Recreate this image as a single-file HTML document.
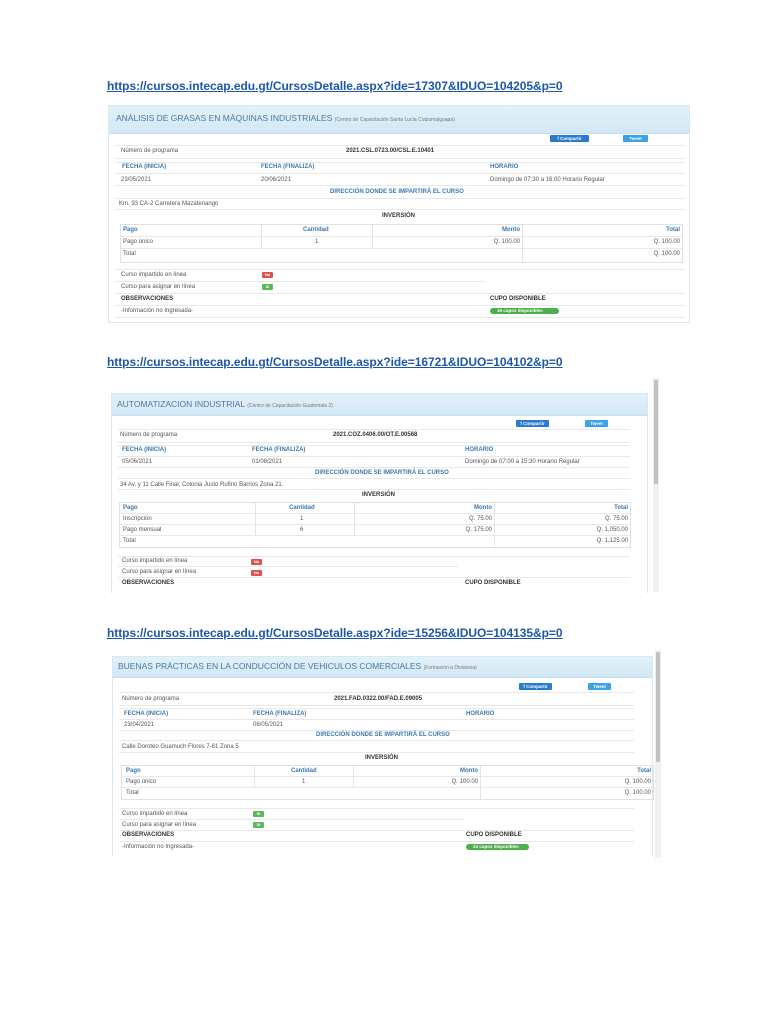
<!DOCTYPE html>
<html><head><meta charset="utf-8"><style>
*{margin:0;padding:0;box-sizing:border-box}
body{width:768px;height:1024px;background:#fff;position:relative;overflow:hidden;font-family:"Liberation Sans",Arial,sans-serif;color:#555}
.a{position:absolute;white-space:nowrap;font-size:6px;line-height:8px}
.lnk{position:absolute;font-size:12px;font-weight:bold;color:#1f57a8;text-decoration:underline;line-height:14px;letter-spacing:-0.05px}
.pan{position:absolute;border:1px solid #d6e9f3;background:#fff}
.hd{position:absolute;background:linear-gradient(#e3f1f9,#d2e8f5);border-bottom:1px solid #c4dfee}
.ttl{position:absolute;white-space:nowrap;font-size:8.5px;color:#4a7a9e;line-height:10px}
.ttl small{font-size:5px;color:#777}
.b{font-weight:bold;color:#3b78ad}
.k{font-weight:bold;color:#333}
.ln{position:absolute;height:1px;background:#e8e8e8}
.vl{position:absolute;width:1px;background:#e3e3e3}
.tb{position:absolute;border:1px solid #e0e0e0}
.btn{position:absolute;background:#2a7ad0;color:#fff;font-size:4.5px;font-weight:bold;text-align:center;line-height:7px;height:7px;border-radius:1px}
.tw{background:#3ba2e6}
.no{position:absolute;background:#d9534f;color:#fff;font-size:4px;font-weight:bold;width:11px;height:6px;line-height:6px;text-align:center;border-radius:1px}
.si{background:#5cb85c}
.pill{position:absolute;background:#4cae4c;color:#fff;font-size:4.5px;font-weight:bold;height:6px;line-height:6px;border-radius:3px;padding-left:7px}
.sb{position:absolute;background:#f0f0f0}
.sb i{position:absolute;left:1px;right:1px;background:#c1c1c1}
.r{text-align:right}
</style></head><body>

<!-- BLOCK 1 -->
<div class="lnk" style="left:107px;top:79px">https://cursos.intecap.edu.gt/CursosDetalle.aspx?ide=17307&amp;IDUO=104205&amp;p=0</div>
<div class="pan" style="left:108px;top:105px;width:582px;height:218px"></div>
<div class="hd" style="left:109px;top:106px;width:580px;height:28px"></div>
<div class="ttl" style="left:116px;top:113px">ANÁLISIS DE GRASAS EN MÁQUINAS INDUSTRIALES <small>(Centro de Capacitación Santa Lucía Cotzumalguapa)</small></div>
<div class="btn" style="left:550px;top:135px;width:39px">f Compartir</div>
<div class="btn tw" style="left:623px;top:135px;width:25px">Tweet</div>
<div class="ln" style="left:115px;top:145px;width:570px"></div>
<div class="a" style="left:121px;top:147px">Número de programa</div>
<div class="a k" style="left:346px;top:147px">2021.CSL.0723.00/CSL.E.10401</div>
<div class="ln" style="left:115px;top:158px;width:570px"></div>
<div class="ln" style="left:115px;top:162px;width:570px"></div>
<div class="a b" style="left:122px;top:163px">FECHA (INICIA)</div>
<div class="a b" style="left:261px;top:163px">FECHA (FINALIZA)</div>
<div class="a b" style="left:490px;top:163px">HORARIO</div>
<div class="ln" style="left:115px;top:173px;width:570px"></div>
<div class="a" style="left:121px;top:176px">23/05/2021</div>
<div class="a" style="left:261px;top:176px">20/06/2021</div>
<div class="a" style="left:490px;top:176px">Domingo de 07:30 a 16:00 Horario Regular</div>
<div class="ln" style="left:115px;top:185px;width:570px"></div>
<div class="a b" style="left:330px;top:188px">DIRECCIÓN DONDE SE IMPARTIRÁ EL CURSO</div>
<div class="ln" style="left:115px;top:198px;width:570px"></div>
<div class="a" style="left:119px;top:200px">Km. 93 CA-2 Carretera Mazatenango</div>
<div class="ln" style="left:115px;top:209px;width:570px"></div>
<div class="a k" style="left:382px;top:212px">INVERSIÓN</div>
<div class="tb" style="left:120px;top:224px;width:563px;height:39px"></div>
<div class="ln" style="left:121px;top:236px;width:561px"></div>
<div class="ln" style="left:121px;top:248px;width:561px"></div>
<div class="vl" style="left:261px;top:225px;height:23px"></div>
<div class="vl" style="left:372px;top:225px;height:23px"></div>
<div class="vl" style="left:522px;top:225px;height:37px"></div>
<div class="a b" style="left:123px;top:226px">Pago</div>
<div class="a b" style="left:303px;top:226px">Cantidad</div>
<div class="a b r" style="left:470px;top:226px;width:50px">Monto</div>
<div class="a b r" style="left:620px;top:226px;width:60px">Total</div>
<div class="a" style="left:123px;top:238px">Pago único</div>
<div class="a" style="left:315px;top:238px">1</div>
<div class="a r" style="left:470px;top:238px;width:50px">Q. 100.00</div>
<div class="a r" style="left:610px;top:238px;width:70px">Q. 100.00</div>
<div class="a" style="left:123px;top:250px">Total</div>
<div class="a r" style="left:610px;top:250px;width:70px">Q. 100.00</div>
<div class="ln" style="left:115px;top:269px;width:570px"></div>
<div class="a" style="left:121px;top:271px">Curso impartido en línea</div>
<div class="no" style="left:262px;top:272px">No</div>
<div class="ln" style="left:115px;top:281px;width:370px"></div>
<div class="a" style="left:121px;top:283px">Curso para asignar en línea</div>
<div class="no si" style="left:262px;top:284px">Sí</div>
<div class="ln" style="left:115px;top:293px;width:570px"></div>
<div class="a k" style="left:121px;top:295px">OBSERVACIONES</div>
<div class="a k" style="left:490px;top:295px">CUPO DISPONIBLE</div>
<div class="ln" style="left:115px;top:305px;width:570px"></div>
<div class="a" style="left:121px;top:307px">-Información no Ingresada-</div>
<div class="pill" style="left:490px;top:308px;width:69px">15 cupos disponibles</div>
<div class="ln" style="left:115px;top:317px;width:570px"></div>

<!-- BLOCK 2 -->
<div class="lnk" style="left:107px;top:355px">https://cursos.intecap.edu.gt/CursosDetalle.aspx?ide=16721&amp;IDUO=104102&amp;p=0</div>
<div class="sb" style="left:653px;top:378px;width:6px;height:214px"><i style="top:2px;height:104px"></i></div>
<div class="pan" style="left:111px;top:393px;width:537px;height:200px;border-bottom:none"></div>
<div class="hd" style="left:112px;top:394px;width:535px;height:22px"></div>
<div class="ttl" style="left:117px;top:399px">AUTOMATIZACION INDUSTRIAL <small>(Centro de Capacitación Guatemala 2)</small></div>
<div class="btn" style="left:516px;top:420px;width:33px">f Compartir</div>
<div class="btn tw" style="left:585px;top:420px;width:23px">Tweet</div>
<div class="ln" style="left:118px;top:429px;width:512px"></div>
<div class="a" style="left:120px;top:431px">Número de programa</div>
<div class="a k" style="left:333px;top:431px">2021.COZ.0406.00/OT.E.00568</div>
<div class="ln" style="left:118px;top:442px;width:512px"></div>
<div class="ln" style="left:118px;top:445px;width:512px"></div>
<div class="a b" style="left:122px;top:446px">FECHA (INICIA)</div>
<div class="a b" style="left:252px;top:446px">FECHA (FINALIZA)</div>
<div class="a b" style="left:465px;top:446px">HORARIO</div>
<div class="ln" style="left:118px;top:456px;width:512px"></div>
<div class="a" style="left:122px;top:458px">05/06/2021</div>
<div class="a" style="left:252px;top:458px">01/08/2021</div>
<div class="a" style="left:465px;top:458px">Domingo de 07:00 a 15:30 Horario Regular</div>
<div class="ln" style="left:118px;top:467px;width:512px"></div>
<div class="a b" style="left:315px;top:469px">DIRECCIÓN DONDE SE IMPARTIRÁ EL CURSO</div>
<div class="ln" style="left:118px;top:478px;width:512px"></div>
<div class="a" style="left:120px;top:481px">34 Av. y 11 Calle Final, Colonia Justo Rufino Barrios Zona 21.</div>
<div class="ln" style="left:118px;top:489px;width:512px"></div>
<div class="a k" style="left:362px;top:491px">INVERSIÓN</div>
<div class="tb" style="left:119px;top:502px;width:512px;height:46px"></div>
<div class="ln" style="left:120px;top:513px;width:510px"></div>
<div class="ln" style="left:120px;top:524px;width:510px"></div>
<div class="ln" style="left:120px;top:535px;width:510px"></div>
<div class="vl" style="left:255px;top:503px;height:32px"></div>
<div class="vl" style="left:354px;top:503px;height:32px"></div>
<div class="vl" style="left:494px;top:503px;height:44px"></div>
<div class="a b" style="left:123px;top:504px">Pago</div>
<div class="a b" style="left:289px;top:504px">Cantidad</div>
<div class="a b r" style="left:440px;top:504px;width:52px">Monto</div>
<div class="a b r" style="left:570px;top:504px;width:58px">Total</div>
<div class="a" style="left:123px;top:515px">Inscripción</div>
<div class="a" style="left:300px;top:515px">1</div>
<div class="a r" style="left:440px;top:515px;width:52px">Q. 75.00</div>
<div class="a r" style="left:570px;top:515px;width:58px">Q. 75.00</div>
<div class="a" style="left:123px;top:526px">Pago mensual</div>
<div class="a" style="left:300px;top:526px">6</div>
<div class="a r" style="left:440px;top:526px;width:52px">Q. 175.00</div>
<div class="a r" style="left:570px;top:526px;width:58px">Q. 1,050.00</div>
<div class="a" style="left:123px;top:537px">Total</div>
<div class="a r" style="left:570px;top:537px;width:58px">Q. 1,125.00</div>
<div class="ln" style="left:118px;top:556px;width:512px"></div>
<div class="a" style="left:122px;top:557px">Curso impartido en línea</div>
<div class="no" style="left:251px;top:559px">No</div>
<div class="ln" style="left:118px;top:566px;width:340px"></div>
<div class="a" style="left:122px;top:568px">Curso para asignar en línea</div>
<div class="no" style="left:251px;top:570px">No</div>
<div class="ln" style="left:118px;top:577px;width:512px"></div>
<div class="a k" style="left:122px;top:579px">OBSERVACIONES</div>
<div class="a k" style="left:465px;top:579px">CUPO DISPONIBLE</div>

<!-- BLOCK 3 -->
<div class="lnk" style="left:107px;top:626px">https://cursos.intecap.edu.gt/CursosDetalle.aspx?ide=15256&amp;IDUO=104135&amp;p=0</div>
<div class="sb" style="left:655px;top:650px;width:6px;height:208px"><i style="top:2px;height:110px"></i></div>
<div class="pan" style="left:112px;top:656px;width:541px;height:200px;border-bottom:none"></div>
<div class="hd" style="left:113px;top:657px;width:539px;height:21px"></div>
<div class="ttl" style="left:118px;top:661px">BUENAS PRÁCTICAS EN LA CONDUCCIÓN DE VEHICULOS COMERCIALES <small>(Formación a Distancia)</small></div>
<div class="btn" style="left:519px;top:683px;width:33px">f Compartir</div>
<div class="btn tw" style="left:588px;top:683px;width:23px">Tweet</div>
<div class="ln" style="left:119px;top:692px;width:515px"></div>
<div class="a" style="left:122px;top:695px">Número de programa</div>
<div class="a k" style="left:334px;top:695px">2021.FAD.0322.00/FAD.E.09005</div>
<div class="ln" style="left:119px;top:705px;width:515px"></div>
<div class="ln" style="left:119px;top:708px;width:515px"></div>
<div class="a b" style="left:124px;top:710px">FECHA (INICIA)</div>
<div class="a b" style="left:253px;top:710px">FECHA (FINALIZA)</div>
<div class="a b" style="left:466px;top:710px">HORARIO</div>
<div class="ln" style="left:119px;top:719px;width:515px"></div>
<div class="a" style="left:124px;top:721px">23/04/2021</div>
<div class="a" style="left:253px;top:721px">06/05/2021</div>
<div class="ln" style="left:119px;top:730px;width:515px"></div>
<div class="a b" style="left:316px;top:731px">DIRECCIÓN DONDE SE IMPARTIRÁ EL CURSO</div>
<div class="ln" style="left:119px;top:740px;width:515px"></div>
<div class="a" style="left:122px;top:743px">Calle Dorotéo Guamuch Flores 7-61 Zona 5</div>
<div class="ln" style="left:119px;top:752px;width:515px"></div>
<div class="a k" style="left:365px;top:754px">INVERSIÓN</div>
<div class="tb" style="left:121px;top:765px;width:533px;height:35px"></div>
<div class="ln" style="left:122px;top:776px;width:531px"></div>
<div class="ln" style="left:122px;top:787px;width:531px"></div>
<div class="vl" style="left:254px;top:766px;height:21px"></div>
<div class="vl" style="left:353px;top:766px;height:21px"></div>
<div class="vl" style="left:480px;top:766px;height:33px"></div>
<div class="a b" style="left:126px;top:767px">Pago</div>
<div class="a b" style="left:291px;top:767px">Cantidad</div>
<div class="a b r" style="left:430px;top:767px;width:48px">Monto</div>
<div class="a b r" style="left:590px;top:767px;width:61px">Total</div>
<div class="a" style="left:126px;top:778px">Pago único</div>
<div class="a" style="left:302px;top:778px">1</div>
<div class="a r" style="left:430px;top:778px;width:48px">Q. 100.00</div>
<div class="a r" style="left:590px;top:778px;width:61px">Q. 100.00</div>
<div class="a" style="left:126px;top:789px">Total</div>
<div class="a r" style="left:590px;top:789px;width:61px">Q. 100.00</div>
<div class="ln" style="left:119px;top:808px;width:515px"></div>
<div class="a" style="left:122px;top:810px">Curso impartido en línea</div>
<div class="no si" style="left:253px;top:811px">Sí</div>
<div class="ln" style="left:119px;top:819px;width:345px"></div>
<div class="a" style="left:122px;top:821px">Curso para asignar en línea</div>
<div class="no si" style="left:253px;top:822px">Sí</div>
<div class="ln" style="left:119px;top:830px;width:515px"></div>
<div class="a k" style="left:122px;top:831px">OBSERVACIONES</div>
<div class="a k" style="left:466px;top:831px">CUPO DISPONIBLE</div>
<div class="ln" style="left:119px;top:841px;width:515px"></div>
<div class="a" style="left:122px;top:843px">-Información no Ingresada-</div>
<div class="pill" style="left:466px;top:844px;width:63px">24 cupos disponibles</div>

</body></html>
